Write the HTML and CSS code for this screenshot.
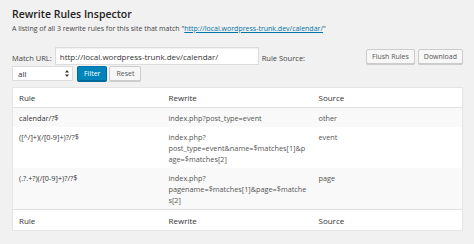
FILE: index.html
```html
<!DOCTYPE html>
<html lang="en">
<head>
  <meta charset="UTF-8">
  <title>Rewrite Rules Inspector</title>
  <link rel="stylesheet" href="styles.css">
</head>
<body>
  <div class="wrap">
    <h2>Rewrite Rules Inspector</h2>
    <p class="intro">A listing of all 3 rewrite rules for this site that match "<a href="#">http://local.wordpress-trunk.dev/calendar/</a>"</p>

    <form class="filters">
      <div class="filter-row">
        <label class="label" for="match-url">Match URL:</label>
        <input id="match-url" class="url-input" type="text" value="http://local.wordpress-trunk.dev/calendar/">
        <span class="label">Rule Source:</span>
        <div class="actions">
          <button type="button" class="btn">Flush Rules</button>
          <button type="button" class="btn">Download</button>
        </div>
      </div>
      <div class="filter-row">
        <div class="select">
          <span>all</span>
          <svg width="4" height="7" viewBox="0 0 4 7"><path d="M2 0 L4 2.5 L0 2.5 Z M2 7 L4 4.5 L0 4.5 Z" fill="#333"/></svg>
        </div>
        <button type="button" class="btn btn-primary">Filter</button>
        <button type="button" class="btn btn-wide">Reset</button>
      </div>
    </form>

    <table class="rules">
      <thead>
        <tr><th>Rule</th><th>Rewrite</th><th>Source</th></tr>
      </thead>
      <tbody>
        <tr class="alt">
          <td class="rule">calendar/?$</td>
          <td>index.php?post_type=event</td>
          <td>other</td>
        </tr>
        <tr>
          <td class="rule">([^/]+)(/[0-9]+)?/?$</td>
          <td>index.php?<br>post_type=event&amp;name=$matches[1]&amp;p<br>age=$matches[2]</td>
          <td>event</td>
        </tr>
        <tr class="alt">
          <td class="rule">(.?.+?)(/[0-9]+)?/?$</td>
          <td>index.php?<br>pagename=$matches[1]&amp;page=$matche<br>s[2]</td>
          <td>page</td>
        </tr>
      </tbody>
      <tfoot>
        <tr><th>Rule</th><th>Rewrite</th><th>Source</th></tr>
      </tfoot>
    </table>
  </div>
</body>
</html>
```

FILE: styles.css
```css
body {
  margin: 0;
  background-color: #f1f1f1;
  color: #444;
  font-family: "Open Sans", sans-serif;
  font-size: 7.5px;
}

.wrap {
  padding: 7px 11px 0 12px;
}

h2 {
  margin: 0;
  font-size: 10.5px;
  font-weight: 600;
  color: #222;
  line-height: 15px;
}

.intro {
  margin: 1px 0 0;
  font-size: 7px;
  line-height: 12px;
}

.intro a {
  color: #0073aa;
}

.filters {
  margin-top: 12px;
}

.filter-row {
  display: flex;
  align-items: center;
  gap: 3px;
}

.label {
  font-size: 7.5px;
  margin-top: 4px;
}

.url-input {
  width: 204px;
  height: 18px;
  box-sizing: border-box;
  margin: 0;
  padding: 0 4px;
  border: 1px solid #ddd;
  background: #fff;
  color: #333;
  font-family: "Open Sans", sans-serif;
  font-size: 8px;
  box-shadow: inset 0 1px 2px rgba(0,0,0,0.07);
}

.actions {
  margin-left: auto;
  display: flex;
  gap: 3px;
}

.btn {
  height: 15px;
  padding: 0 5px;
  border: 1px solid #ccc;
  border-radius: 2px;
  background: #f7f7f7;
  color: #555;
  font-family: "Open Sans", sans-serif;
  font-size: 7px;
  box-shadow: 0 1px 0 #ccc;
}

.btn-wide {
  padding: 0 6px;
}

.btn-primary {
  background: #0085ba;
  border-color: #0073aa #006799 #006799;
  color: #fff;
  box-shadow: 0 1px 0 #006799;
  padding: 0 6px;
}

.filter-row + .filter-row {
  margin-top: 1px;
  gap: 2px;
}

.select {
  width: 61px;
  height: 15px;
  box-sizing: border-box;
  display: flex;
  align-items: center;
  justify-content: space-between;
  padding: 0 3px 0 5px;
  background: #fff;
  border: 1px solid #ddd;
  color: #333;
  font-size: 8px;
  margin-right: 2px;
}

.rules {
  margin-top: 6px;
  width: 451px;
  border-collapse: collapse;
  table-layout: fixed;
  background: #fff;
  border: 1px solid #e5e5e5;
  box-shadow: 0 1px 1px rgba(0,0,0,0.04);
}

.rules th {
  text-align: left;
  font-weight: normal;
  font-size: 8px;
  color: #333;
  padding: 0 6px;
  height: 19px;
}

.rules thead th {
  border-bottom: 1px solid #e1e1e1;
}

.rules tfoot th {
  border-top: 1px solid #e1e1e1;
  height: 20px;
}

.rules td {
  vertical-align: top;
  padding: 4.5px 6px 3.5px;
  line-height: 11px;
  font-size: 7.3px;
  color: #555;
}

.rules td.rule {
  color: #333;
}

.rules tr.alt td {
  background: #f9f9f9;
}
```
